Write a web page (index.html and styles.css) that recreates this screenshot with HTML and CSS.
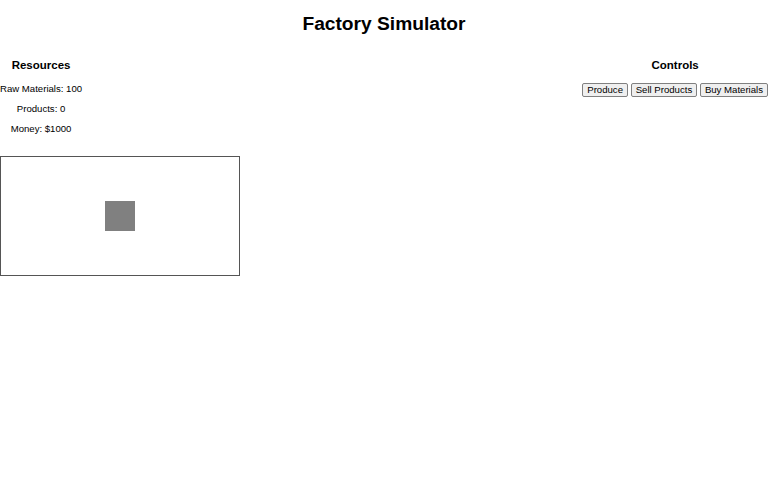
FILE: index.html
```html
<!DOCTYPE html>
<html>
<head>
<meta charset="utf-8">
<title>Factory Simulator</title>
<link rel="stylesheet" href="styles.css">
</head>
<body>
<h1 class="title">Factory Simulator</h1>
<div class="panels">
  <div class="panel">
    <h3 class="panel-title">Resources</h3>
    <p class="stat">Raw Materials: 100</p>
    <p class="stat">Products: 0</p>
    <p class="stat">Money: $1000</p>
  </div>
  <div class="panel">
    <h3 class="panel-title">Controls</h3>
    <div class="buttons">
      <button class="btn">Produce</button>
      <button class="btn">Sell Products</button>
      <button class="btn">Buy Materials</button>
    </div>
  </div>
</div>
<div class="factory">
  <div class="machine"></div>
</div>
</body>
</html>
```
FILE: styles.css
```css
body {
  margin: 0;
  font-family: "Liberation Sans", Arial, sans-serif;
  font-size: 9.6px;
  color: #000;
  background: #fff;
}
.title {
  text-align: center;
  font-size: 19.2px;
  line-height: 22px;
  margin: 12.9px 0;
}
.panels {
  display: flex;
  justify-content: space-between;
}
.panel {
  text-align: center;
}
.panel-title {
  font-size: 11.5px;
  line-height: 13px;
  margin: 11.5px 0 11px;
}
.stat {
  line-height: 11px;
  margin: 9px 0;
}
.buttons {
  white-space: nowrap;
}
.btn {
  font-family: "Liberation Sans", Arial, sans-serif;
  font-size: 9.6px;
  line-height: 11px;
  padding: 0 4px 1px;
  margin: 0;
  border: 1px solid #808080;
  border-radius: 2px;
  background: #efefef;
  color: #000;
}
.factory {
  width: 238px;
  height: 118px;
  border: 1px solid #555;
  margin-top: 12.8px;
  display: flex;
  align-items: center;
  justify-content: center;
}
.machine {
  width: 30px;
  height: 30px;
  background: #808080;
}
```
